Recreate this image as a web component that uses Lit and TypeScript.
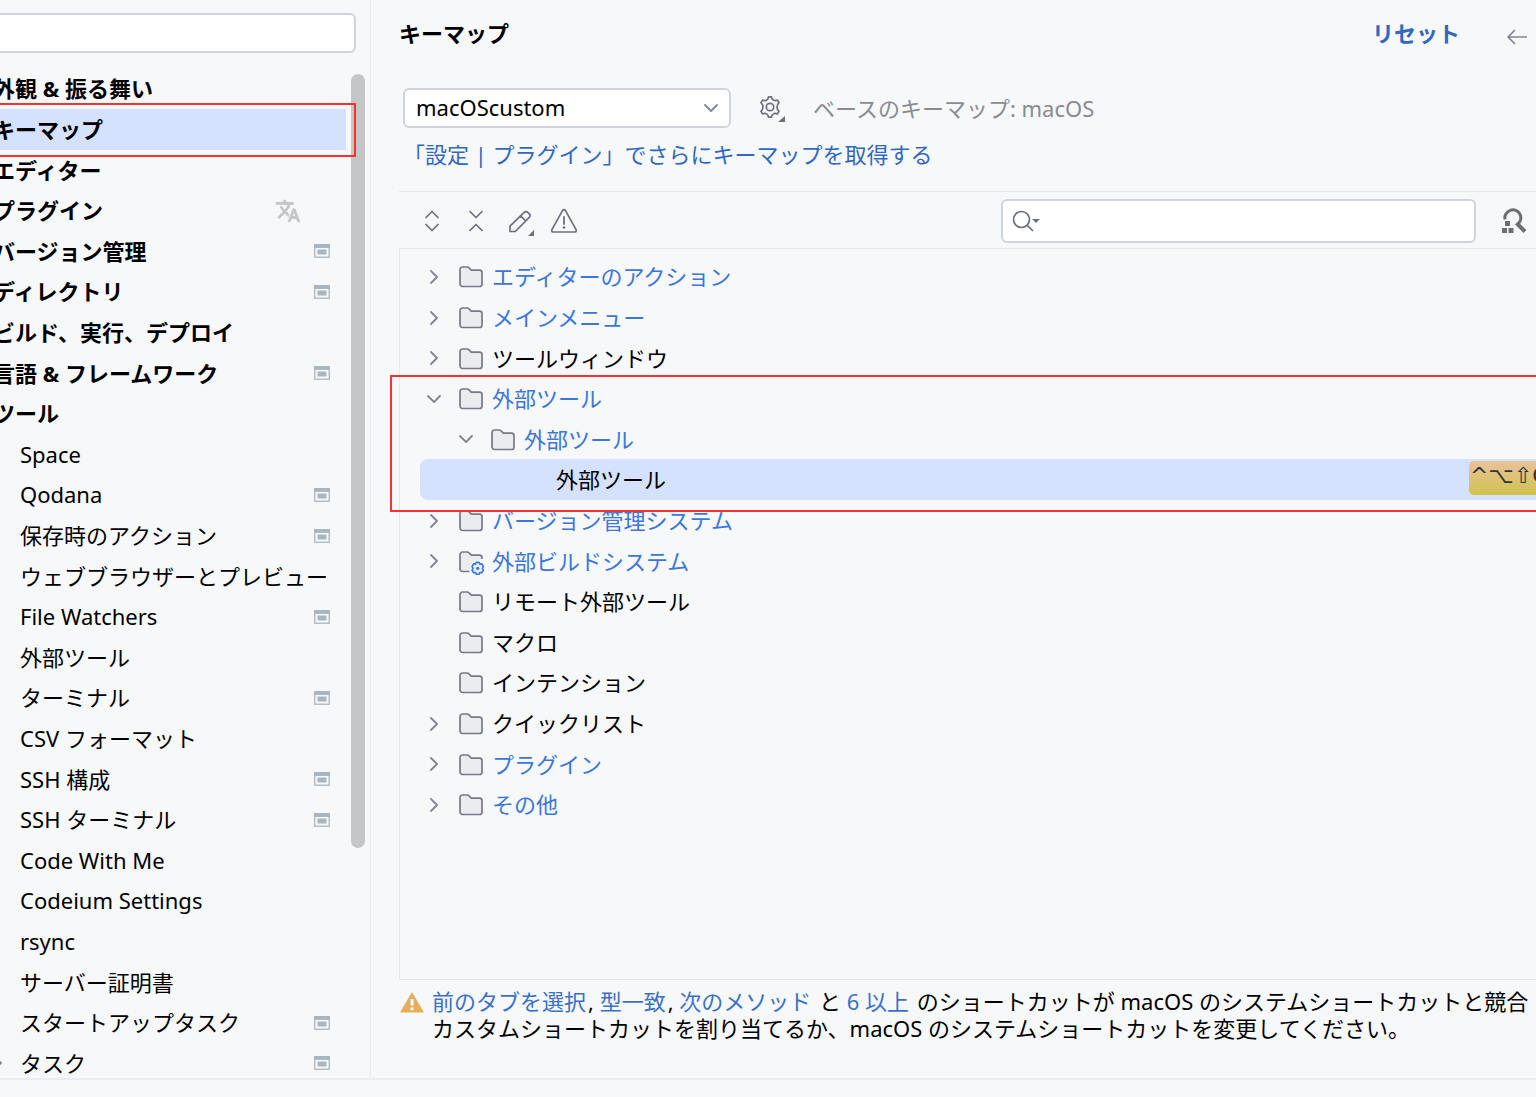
import { LitElement, html, svg, css, nothing } from "lit";
import { customElement, property, state } from "lit/decorators.js";
import { classMap } from "lit/directives/class-map.js";
import { styleMap } from "lit/directives/style-map.js";

interface NavItem {
  label: string;
  top?: boolean;
  project?: boolean;
  translate?: boolean;
  selected?: boolean;
  expandable?: boolean;
}

interface TreeRow {
  label: string;
  level: number;
  chevron?: "right" | "down";
  icon?: "folder" | "build";
  modified?: boolean;
  selected?: boolean;
  shortcut?: string;
}

const NAV: NavItem[] = [
  { label: "外観 & 振る舞い", top: true },
  { label: "キーマップ", top: true, selected: true },
  { label: "エディター", top: true },
  { label: "プラグイン", top: true, translate: true },
  { label: "バージョン管理", top: true, project: true },
  { label: "ディレクトリ", top: true, project: true },
  { label: "ビルド、実行、デプロイ", top: true },
  { label: "言語 & フレームワーク", top: true, project: true },
  { label: "ツール", top: true },
  { label: "Space" },
  { label: "Qodana", project: true },
  { label: "保存時のアクション", project: true },
  { label: "ウェブブラウザーとプレビュー" },
  { label: "File Watchers", project: true },
  { label: "外部ツール" },
  { label: "ターミナル", project: true },
  { label: "CSV フォーマット" },
  { label: "SSH 構成", project: true },
  { label: "SSH ターミナル", project: true },
  { label: "Code With Me" },
  { label: "Codeium Settings" },
  { label: "rsync" },
  { label: "サーバー証明書" },
  { label: "スタートアップタスク", project: true },
  { label: "タスク", project: true, expandable: true },
];

const TREE: TreeRow[] = [
  { label: "エディターのアクション", level: 0, chevron: "right", icon: "folder", modified: true },
  { label: "メインメニュー", level: 0, chevron: "right", icon: "folder", modified: true },
  { label: "ツールウィンドウ", level: 0, chevron: "right", icon: "folder" },
  { label: "外部ツール", level: 0, chevron: "down", icon: "folder", modified: true },
  { label: "外部ツール", level: 1, chevron: "down", icon: "folder", modified: true },
  { label: "外部ツール", level: 2, selected: true, shortcut: "^⌥⇧C" },
  { label: "バージョン管理システム", level: 0, chevron: "right", icon: "folder", modified: true },
  { label: "外部ビルドシステム", level: 0, chevron: "right", icon: "build", modified: true },
  { label: "リモート外部ツール", level: 0, icon: "folder" },
  { label: "マクロ", level: 0, icon: "folder" },
  { label: "インテンション", level: 0, icon: "folder" },
  { label: "クイックリスト", level: 0, chevron: "right", icon: "folder" },
  { label: "プラグイン", level: 0, chevron: "right", icon: "folder", modified: true },
  { label: "その他", level: 0, chevron: "right", icon: "folder", modified: true },
];

const icon = (w: number, h: number, body: unknown) => html`<svg
  width=${w}
  height=${h}
  viewBox="0 0 ${w} ${h}"
  fill="none"
  aria-hidden="true"
>
  ${body}
</svg>`;

const chevronRight = () =>
  icon(14, 14, svg`<path d="M4 1l6 6-6 6" stroke="#818594" stroke-width="1.8" stroke-linecap="round" stroke-linejoin="round"/>`);
const chevronDown = () =>
  icon(14, 14, svg`<path d="M1 4l6 6 6-6" stroke="#818594" stroke-width="1.8" stroke-linecap="round" stroke-linejoin="round"/>`);

const folder = () =>
  icon(24, 22, svg`<path d="M1 3.500A2.500 2.500 0 0 1 3.500 1h4.800c.6 0 1.100.2 1.500.6l2.500 2.500h8.200A2.500 2.500 0 0 1 23 6.600v11.400a2.500 2.500 0 0 1-2.500 2.500h-17A2.500 2.500 0 0 1 1 18z" fill="#ebecf0" stroke="#767a86" stroke-width="1.700"/>`);

const folderBuild = () =>
  icon(26, 24, svg`
    <path d="M10.500 20.500h-7A2.500 2.500 0 0 1 1 18V3.500A2.500 2.500 0 0 1 3.500 1h4.800c.6 0 1.100.2 1.500.6l2.500 2.500h8.200A2.500 2.500 0 0 1 23 6.600v2.400l-4 0-8 5z" fill="#ebecf0"/>
    <path d="M10.500 20.500h-7A2.500 2.500 0 0 1 1 18V3.500A2.500 2.500 0 0 1 3.500 1h4.800c.6 0 1.100.2 1.500.6l2.500 2.500h8.200A2.500 2.500 0 0 1 23 6.600v1.400" stroke="#767a86" stroke-width="1.700"/>
    <circle cx="18.700" cy="17.300" r="8" fill="#f7f8fa"/>
    <path d="M17.200 11.400h3l.7 1.700 1.800-.3 1.700 2.600-1 1.900 1 1.900-1.700 2.600-1.800-.3-.7 1.700h-3l-.7-1.700-1.800.3-1.700-2.600 1-1.900-1-1.900 1.700-2.600 1.800.3z" stroke="#3574f0" stroke-width="1.600" stroke-linejoin="round" fill="#e7effd"/>
    <circle cx="18.700" cy="17.300" r="1.600" fill="#3574f0"/>`);

const projectIcon = () =>
  icon(16, 14, svg`<path fill="#b3bec6" fill-rule="evenodd" d="M0 0h16v14H0zM1.500 4v8.500h13V4z"/><path fill="#a9b6bf" d="M0 0h16v3.500H0zM3.500 5.500h9v5h-9z"/>`);

const translateIcon = () => html`<svg width="26" height="26" viewBox="0 0 24 24" aria-hidden="true">
  <path fill="#c3c5c9" stroke="#c3c5c9" stroke-width="0.700" d="M12.870 15.070l-2.540-2.510.03-.03c1.740-1.940 2.980-4.170 3.710-6.530H17V4h-7V2H8v2H1v1.990h11.170C11.500 7.920 10.440 9.750 9 11.350 8.070 10.320 7.300 9.190 6.690 8h-2c.73 1.630 1.730 3.170 2.980 4.560l-5.090 5.020L4 19l5-5 3.110 3.110.76-2.040zM18.500 10h-2L12 22h2l1.120-3h4.750L21 22h2l-4.500-12zm-2.620 7l1.620-4.330L19.120 17h-3.240z"/>
</svg>`;

const gearIcon = () =>
  icon(28, 28, svg`
    <g transform="translate(1 1)" stroke="#6c707e" stroke-width="1.700" stroke-linejoin="round">
      <path d="M9.600 0.800h2.800c.4 1.900 1 3 2.200 3.500 1.100.5 2.300.3 3.900-.2l1.500 2.600c-1.300 1.300-2 2.300-2 4.300s.7 3 2 4.300l-1.500 2.600c-1.600-.5-2.800-.7-3.900-.2-1.200.5-1.800 1.600-2.200 3.500H9.600c-.4-1.900-1-3-2.200-3.500-1.100-.5-2.300-.3-3.900.2L2 15.300C3.300 14 4 13 4 11s-.7-3-2-4.300l1.500-2.600c1.600.5 2.800.7 3.900.2 1.200-.5 1.800-1.600 2.200-3.500z"/>
      <circle cx="11" cy="11" r="3.700"/>
    </g>
    <path d="M27 21v6h-7z" fill="#6c707e"/>`);

const expandIcon = () =>
  icon(16, 22, svg`<path d="M2 7.500l6-6 6 6M2 14.500l6 6 6-6" stroke="#6c707e" stroke-width="1.700" stroke-linecap="round" stroke-linejoin="round"/>`);
const collapseIcon = () =>
  icon(16, 22, svg`<path d="M2 1.500l6 6 6-6M2 20.500l6-6 6 6" stroke="#6c707e" stroke-width="1.700" stroke-linecap="round" stroke-linejoin="round"/>`);
const pencilIcon = () =>
  icon(26, 26, svg`
    <path d="M2 21.500v-5.300L16.200 2.300a2.500 2.500 0 0 1 3.600 0l1.500 1.500a2.500 2.500 0 0 1 0 3.600L7.300 21.500zM12.600 5.900l5.100 5.100" stroke="#6c707e" stroke-width="1.700" stroke-linejoin="round"/>
    <path d="M26 20v6h-6z" fill="#6c707e"/>`);
const warnOutline = () =>
  icon(28, 26, svg`
    <path d="M12.500 2.600a1.700 1.700 0 0 1 3 0l10.600 19a1.600 1.600 0 0 1-1.400 2.400H3.300a1.600 1.600 0 0 1-1.400-2.400z" stroke="#6c707e" stroke-width="1.700" stroke-linejoin="round"/>
    <path d="M14 9v7" stroke="#6c707e" stroke-width="1.800" stroke-linecap="round"/>
    <circle cx="14" cy="19.500" r="1.300" fill="#6c707e"/>`);
const warnFilled = () =>
  icon(24, 22, svg`<path d="M12 1l12 20.500H0z" fill="#e6ae5c"/><path d="M10.600 8h2.900v6.500h-2.900zM10.600 16.500h2.900v2.800h-2.900z" fill="#fff"/>`);
const searchIcon = () =>
  icon(28, 22, svg`
    <circle cx="9.500" cy="9.500" r="8" stroke="#6c707e" stroke-width="1.700"/>
    <path d="M15.300 15.300l5.700 5.700" stroke="#6c707e" stroke-width="1.700"/>
    <path d="M20 9h8l-4 4z" fill="#6c707e"/>`);
const findShortcutIcon = () =>
  icon(26, 26, svg`
    <path d="M4 11.500a8 8 0 1 1 12.300 5" stroke="#6e6e6e" stroke-width="3"/>
    <path d="M15.500 15l8.500 8.500" stroke="#6e6e6e" stroke-width="4"/>
    <path d="M4 13h5v5H4zM1 20h5v5H1zM7.500 20h5v5h-5z" fill="#6e6e6e"/>`);
const backIcon = () =>
  icon(20, 16, svg`<path d="M8 1L1 8l7 7M1 8h19" stroke="#818594" stroke-width="1.700" stroke-linejoin="round"/>`);

const shared = css`
  :host {
    font-family: "Noto Sans", "Noto Sans CJK JP", sans-serif;
    font-size: 22px;
    line-height: 28px;
    color: #000;
  }
  * {
    box-sizing: border-box;
  }
  ul {
    display: grid;
    grid-auto-rows: 41px 41px 40px 41px 40px;
    margin: 0;
    padding: 0;
    list-style: none;
  }
  svg {
    display: block;
    flex: none;
  }
  button {
    flex: none;
    padding: 0;
    border: 0;
    background: none;
    font: inherit;
    color: inherit;
  }
  a {
    color: inherit;
    text-decoration: none;
  }
  input,
  select {
    border: 2px solid #d0d3dc;
    border-radius: 6px;
    background: #fff;
    font: inherit;
    color: inherit;
    outline: none;
  }
`;

@customElement("settings-nav")
export class SettingsNav extends LitElement {
  @property({ attribute: false }) items: NavItem[] = [];

  static styles = [
    shared,
    css`
      :host {
        display: flex;
        flex-direction: column;
        min-height: 0;
        margin-left: -40px;
        padding: 13px 14px 0 0;
        border-right: 1px solid #ebecf0;
        position: relative;
      }
      .search {
        flex: none;
        height: 40px;
        width: 100%;
        padding: 0 12px;
      }
      .list {
        flex: 1;
        min-height: 0;
        overflow: hidden;
        margin-top: 15px;
      }
      .item {
        position: relative;
        display: flex;
        align-items: center;
        margin-right: 10px;
        padding: 0 16px 0 60px;
      }
      .top {
        padding-left: 33px;
        font-weight: 700;
      }
      .selected {
        background: #d4e2ff;
      }
      .label {
        flex: 1;
        padding-bottom: 1px;
        white-space: nowrap;
      }
      .translate {
        margin-right: 29px;
      }
      .toggle {
        margin-left: -29px;
        margin-right: 15px;
      }
      .mark {
        position: absolute;
        inset: -6px -10px -7px 0;
        border: 2px solid #ff2f2f;
        z-index: 2;
        pointer-events: none;
      }
      .thumb {
        position: absolute;
        top: 74px;
        right: 5px;
        width: 14px;
        height: 774px;
        border-radius: 7px;
        background: #c5c6c8;
      }
      .rows {
        position: relative;
        z-index: 1;
      }
    `,
  ];

  render() {
    return html`
      <input class="search" type="search" aria-label="設定の検索" />
      <div class="thumb"></div>
      <nav class="list">
        <ul class="rows">
          ${this.items.map(
            (i) => html`<li class=${classMap({ item: true, top: !!i.top, selected: !!i.selected })}>
              ${i.expandable ? html`<button class="toggle" aria-label="展開">${chevronRight()}</button>` : nothing}
              <a class="label" href="#">${i.label}</a>
              ${i.translate ? html`<span class="translate">${translateIcon()}</span>` : nothing}
              ${i.project ? projectIcon() : nothing}
              ${i.selected ? html`<span class="mark"></span>` : nothing}
            </li>`,
          )}
        </ul>
      </nav>
    `;
  }
}

@customElement("keymap-tree")
export class KeymapTree extends LitElement {
  @property({ attribute: false }) rows: TreeRow[] = [];

  static styles = [
    shared,
    css`
      :host {
        display: block;
        flex: 1;
        min-height: 0;
        padding-top: 7px;
        border: 1px solid #e6e8ec;
        border-right: 0;
      }
      .row {
        position: relative;
        display: flex;
        align-items: center;
        margin-left: 20px;
        border-radius: 8px 0 0 8px;
      }
      .modified {
        color: #3b77d8;
      }
      .selected {
        background: #d4e2ff;
      }
      .toggle,
      .slot {
        flex: none;
        width: 14px;
        margin-right: 18px;
      }
      .icon {
        flex: none;
        width: 24px;
        height: 21px;
        margin-right: 9px;
      }
      .label {
        flex: 1;
        padding-bottom: 1px;
        white-space: nowrap;
      }
      .shortcut {
        width: 67px;
        height: 34px;
        padding-left: 1px;
        border-radius: 5px 0 0 5px;
        overflow: hidden;
        background: linear-gradient(#eac19c, #cfc34c);
        font-family: "DejaVu Sans", sans-serif;
        line-height: 30px;
        color: #333;
        margin-bottom: 4px;
      }
      .mark {
        position: absolute;
        inset: -84px -4px -12px -30px;
        border: 2px solid #ff2f2f;
        z-index: 2;
        pointer-events: none;
      }
    `,
  ];

  render() {
    return html`<ul role="tree">
      ${this.rows.map(
        (r) => html`<li
          role="treeitem"
          aria-level=${r.level + 1}
          class=${classMap({ row: true, modified: !!r.modified, selected: !!r.selected })}
          style=${styleMap({ paddingLeft: `${7 + r.level * 32}px` })}
        >
          ${r.chevron
            ? html`<button class="toggle" aria-label="展開">${r.chevron === "down" ? chevronDown() : chevronRight()}</button>`
            : html`<span class="slot"></span>`}
          <span class="icon">${r.icon === "build" ? folderBuild() : r.icon ? folder() : nothing}</span>
          <span class="label">${r.label}</span>
          ${r.shortcut ? html`<kbd class="shortcut">${r.shortcut}</kbd>` : nothing}
          ${r.selected ? html`<span class="mark"></span>` : nothing}
        </li>`,
      )}
    </ul>`;
  }
}

@customElement("app-root")
export class AppRoot extends LitElement {
  @state() private keymap = "macOScustom";

  static styles = [
    shared,
    css`
      :host {
        display: flex;
        flex-direction: column;
        height: 100vh;
        overflow: hidden;
        background: #f7f8fa;
      }
      .body {
        flex: 1;
        min-height: 0;
        display: grid;
        grid-template-columns: 371px minmax(0, 1fr);
        grid-template-rows: minmax(0, 1fr);
      }
      .footer {
        flex: none;
        height: 19px;
        border-top: 2px solid #ebecf0;
      }
      .panel {
        display: flex;
        flex-direction: column;
        min-height: 0;
        padding-left: 28px;
      }
      .header {
        display: flex;
        align-items: center;
        height: 67px;
        padding-right: 9px;
      }
      .title {
        flex: 1;
        margin: 0;
        padding-bottom: 2px;
        font-size: 22px;
        font-weight: 700;
      }
      .reset {
        margin-right: 47px;
        padding-bottom: 2px;
        font-weight: 700;
        color: #3068c0;
      }
      .back {
        padding-top: 6px;
      }
      .scheme {
        display: flex;
        align-items: center;
        height: 40px;
        margin: 21px 0 0 4px;
      }
      .combo {
        position: relative;
        display: flex;
        align-items: center;
        width: 328px;
      }
      .combo select {
        appearance: none;
        width: 100%;
        height: 40px;
        padding: 0 40px 2px 11px;
      }
      .combo svg {
        position: absolute;
        right: 13px;
        pointer-events: none;
      }
      .gear {
        margin-left: 27px;
        padding-top: 2px;
      }
      .base {
        margin-left: 27px;
        color: #8a8b8f;
        white-space: nowrap;
      }
      .more {
        align-self: flex-start;
        margin: 12px 0 23px 4px;
        color: #3068c0;
      }
      .toolbar {
        flex: none;
        display: flex;
        align-items: center;
        height: 57px;
        padding: 2px 9px 0 25px;
        border-top: 1px solid #e6e8ec;
      }
      .tools {
        flex: 1;
        display: flex;
        align-items: center;
        gap: 28px;
      }
      .tools button:nth-child(3) {
        margin: 4px -12px 0 -4px;
      }
      .find {
        position: relative;
        display: flex;
        align-items: center;
        width: 475px;
        margin-right: 25px;
      }
      .find input {
        width: 100%;
        height: 44px;
        padding: 0 12px 0 48px;
      }
      .find svg {
        position: absolute;
        left: 11px;
      }
      .notice {
        display: flex;
        gap: 8px;
        padding: 8px 0 36px 1px;
        line-height: 27px;
      }
      .notice svg {
        margin-top: 3px;
      }
      .notice p {
        margin: 0;
        white-space: nowrap;
      }
      .notice a {
        margin-right: 2px;
        color: #3b70c8;
      }
    `,
  ];

  render() {
    return html`
      <div class="body">
        <settings-nav .items=${NAV}></settings-nav>
        <main class="panel">
          <header class="header">
            <h1 class="title">キーマップ</h1>
            <button class="reset">リセット</button>
            <button class="back" aria-label="戻る">${backIcon()}</button>
          </header>
          <div class="scheme">
            <div class="combo">
              <select aria-label="キーマップ" .value=${this.keymap}>
                <option>macOScustom</option>
              </select>
              ${chevronDown()}
            </div>
            <button class="gear" aria-label="キーマップの操作">${gearIcon()}</button>
            <span class="base">ベースのキーマップ: macOS</span>
          </div>
          <a class="more" href="#">「設定 | プラグイン」でさらにキーマップを取得する</a>
          <div class="toolbar">
            <div class="tools">
              <button aria-label="すべて展開">${expandIcon()}</button>
              <button aria-label="すべて折りたたむ">${collapseIcon()}</button>
              <button aria-label="ショートカットの編集">${pencilIcon()}</button>
              <button aria-label="競合を表示">${warnOutline()}</button>
            </div>
            <div class="find">
              <input type="search" aria-label="アクションの検索" />
              ${searchIcon()}
            </div>
            <button aria-label="ショートカットで検索">${findShortcutIcon()}</button>
          </div>
          <keymap-tree .rows=${TREE}></keymap-tree>
          <div class="notice">
            ${warnFilled()}
            <p>
              <a href="#">前のタブを選択</a>, <a href="#">型一致</a>, <a href="#">次のメソッド</a> と
              <a href="#">6 以上</a> のショートカットが macOS のシステムショートカットと競合<br />
              カスタムショートカットを割り当てるか、macOS のシステムショートカットを変更してください。
            </p>
          </div>
        </main>
      </div>
      <footer class="footer"></footer>
    `;
  }
}
